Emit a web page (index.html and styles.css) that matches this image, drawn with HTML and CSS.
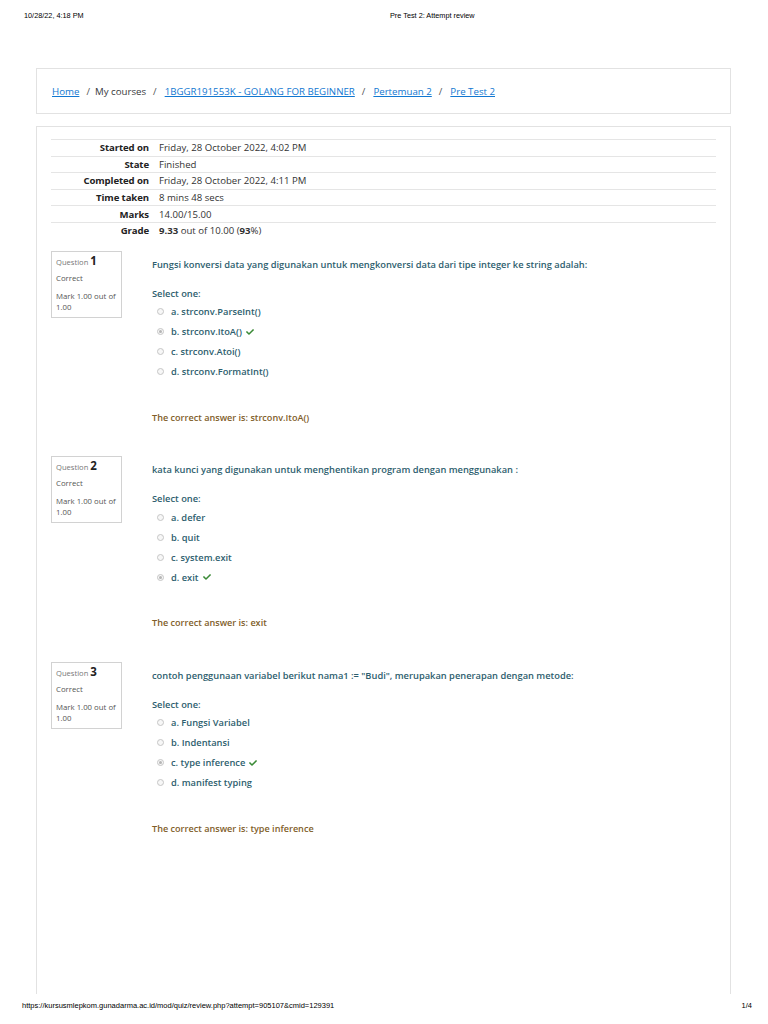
FILE: index.html
```html
<!DOCTYPE html>
<html lang="id">
<head>
<meta charset="utf-8">
<title>Pre Test 2: Attempt review</title>
<link rel="stylesheet" href="styles.css">
</head>
<body>
<div class="page">
  <header class="print-head">
    <span class="ph-date">10/28/22, 4:18 PM</span>
    <span class="ph-title">Pre Test 2: Attempt review</span>
  </header>

  <div class="sheet">
    <nav class="crumbs">
      <a href="#" class="crumb">Home</a><span class="sep">/</span>
      <span class="crumb plain">My courses</span><span class="sep">/</span>
      <a href="#" class="crumb pad">1BGGR191553K - GOLANG FOR BEGINNER</a><span class="sep">/</span>
      <a href="#" class="crumb pad">Pertemuan 2</a><span class="sep">/</span>
      <a href="#" class="crumb pad">Pre Test 2</a>
    </nav>

    <div class="main">
      <div class="summary">
        <div class="srow"><div class="sk">Started on</div><div class="sv">Friday, 28 October 2022, 4:02 PM</div></div>
        <div class="srow"><div class="sk">State</div><div class="sv">Finished</div></div>
        <div class="srow"><div class="sk">Completed on</div><div class="sv">Friday, 28 October 2022, 4:11 PM</div></div>
        <div class="srow"><div class="sk">Time taken</div><div class="sv">8 mins 48 secs</div></div>
        <div class="srow"><div class="sk">Marks</div><div class="sv">14.00/15.00</div></div>
        <div class="srow"><div class="sk">Grade</div><div class="sv"><b>9.33</b> out of 10.00 (<b>93</b>%)</div></div>
      </div>

      <div class="que">
        <div class="info">
          <div class="qno"><span class="qlabel">Question</span> <span class="qnum">1</span></div>
          <div class="qstate">Correct</div>
          <div class="qgrade">Mark 1.00 out of 1.00</div>
        </div>
        <div class="content">
          <div class="qtext">Fungsi konversi data yang digunakan untuk mengkonversi data dari tipe integer ke string adalah:</div>
          <div class="prompt">Select one:</div>
          <div class="answers">
            <div class="opt"><span class="radio"></span><span>a. strconv.ParseInt()</span></div>
            <div class="opt"><span class="radio on"></span><span>b. strconv.ItoA()</span><svg class="tick" viewBox="0 0 512 512"><path d="M173.9 439.4l-166.4-166.4c-10-10-10-26.2 0-36.2l36.2-36.2c10-10 26.2-10 36.2 0L192 312.7 432.1 72.6c10-10 26.2-10 36.2 0l36.2 36.2c10 10 10 26.2 0 36.2l-294.4 294.4c-10 10-26.2 10-36.2 0z"/></svg></div>
            <div class="opt"><span class="radio"></span><span>c. strconv.Atoi()</span></div>
            <div class="opt"><span class="radio"></span><span>d. strconv.FormatInt()</span></div>
          </div>
          <div class="outcome">The correct answer is: strconv.ItoA()</div>
        </div>
      </div>

      <div class="que">
        <div class="info">
          <div class="qno"><span class="qlabel">Question</span> <span class="qnum">2</span></div>
          <div class="qstate">Correct</div>
          <div class="qgrade">Mark 1.00 out of 1.00</div>
        </div>
        <div class="content">
          <div class="qtext">kata kunci yang digunakan untuk menghentikan program dengan menggunakan :</div>
          <div class="prompt">Select one:</div>
          <div class="answers">
            <div class="opt"><span class="radio"></span><span>a. defer</span></div>
            <div class="opt"><span class="radio"></span><span>b. quit</span></div>
            <div class="opt"><span class="radio"></span><span>c. system.exit</span></div>
            <div class="opt"><span class="radio on"></span><span>d. exit</span><svg class="tick" viewBox="0 0 512 512"><path d="M173.9 439.4l-166.4-166.4c-10-10-10-26.2 0-36.2l36.2-36.2c10-10 26.2-10 36.2 0L192 312.7 432.1 72.6c10-10 26.2-10 36.2 0l36.2 36.2c10 10 10 26.2 0 36.2l-294.4 294.4c-10 10-26.2 10-36.2 0z"/></svg></div>
          </div>
          <div class="outcome">The correct answer is: exit</div>
        </div>
      </div>

      <div class="que">
        <div class="info">
          <div class="qno"><span class="qlabel">Question</span> <span class="qnum">3</span></div>
          <div class="qstate">Correct</div>
          <div class="qgrade">Mark 1.00 out of 1.00</div>
        </div>
        <div class="content">
          <div class="qtext">contoh penggunaan variabel berikut nama1 := "Budi", merupakan penerapan dengan metode:</div>
          <div class="prompt">Select one:</div>
          <div class="answers">
            <div class="opt"><span class="radio"></span><span>a. Fungsi Variabel</span></div>
            <div class="opt"><span class="radio"></span><span>b. Indentansi</span></div>
            <div class="opt"><span class="radio on"></span><span>c. type inference</span><svg class="tick" viewBox="0 0 512 512"><path d="M173.9 439.4l-166.4-166.4c-10-10-10-26.2 0-36.2l36.2-36.2c10-10 26.2-10 36.2 0L192 312.7 432.1 72.6c10-10 26.2-10 36.2 0l36.2 36.2c10 10 10 26.2 0 36.2l-294.4 294.4c-10 10-26.2 10-36.2 0z"/></svg></div>
            <div class="opt"><span class="radio"></span><span>d. manifest typing</span></div>
          </div>
          <div class="outcome">The correct answer is: type inference</div>
        </div>
      </div>
    </div>
  </div>

  <footer class="print-foot">
    <span class="pf-url">https://kursusmlepkom.gunadarma.ac.id/mod/quiz/review.php?attempt=905107&amp;cmid=129391</span>
    <span class="pf-page">1/4</span>
  </footer>
</div>
</body>
</html>
```

FILE: styles.css
```css
* { box-sizing: border-box; }
html, body { margin: 0; padding: 0; background: #fff; }
body { font-family: "Open Sans", "Noto Sans", sans-serif; color: #333; }

.page { width: 768px; height: 1024px; overflow: hidden; }

.print-head {
  height: 30px;
  display: flex;
  align-items: center;
  padding-left: 24px;
  font-family: "Liberation Sans", Arial, sans-serif;
  font-size: 7.3px;
  color: #000;
}
.ph-date { width: 366px; }

.sheet {
  height: 964px;
  overflow: hidden;
  padding: 38px 0 0 36px;
}

.crumbs {
  width: 695px;
  height: 46px;
  border: 1px solid #e2e2e2;
  display: flex;
  align-items: center;
  padding: 0 15px;
  font-size: 9.7px;
  white-space: nowrap;
}
.crumb { color: #1177d1; text-decoration: underline; }
.crumb.plain { color: #373a3c; text-decoration: none; }
.crumb.pad { margin-left: 3px; }
.sep { color: #555; margin: 0 5px 0 7px; }

.main {
  width: 695px;
  height: 900px;
  margin-top: 12px;
  border: 1px solid #e2e2e2;
  border-bottom: none;
  padding: 12px 14px 0 14px;
}

.summary { font-size: 9.6px; color: #333; }
.srow {
  display: grid;
  grid-template-columns: 108px 1fr;
  height: 16.6px;
  border-top: 1px solid #e5e5e5;
  align-items: center;
}
.sk { font-weight: 700; text-align: right; padding-right: 10px; color: #222; letter-spacing: -0.1px; }
.sv b { font-weight: 700; }

.que {
  display: flex;
  align-items: flex-start;
  margin-top: 12px;
  margin-bottom: 31.5px;
}
.summary + .que { margin-top: 12.4px; }
.que + .que { margin-top: 0; }

.info {
  width: 71px;
  border: 1px solid #d2d2d2;
  padding: 2px 3px 4px 4px;
  font-size: 7.8px;
  color: #555;
}
.qno { line-height: 14px; }
.qlabel { color: #777; font-size: 7.6px; }
.qnum { font-size: 11.5px; font-weight: 700; color: #222; }
.qstate { line-height: 14px; margin-top: 2px; }
.qgrade { line-height: 11px; margin-top: 6px; }

.content {
  margin-left: 30px;
  font-size: 9.3px;
  font-weight: 600;
  color: #2d5e6e;
}
.qtext { line-height: 14px; margin-top: 7px; }
.prompt { line-height: 14px; margin-top: 15px; }
.answers { margin-top: 1px; }
.opt {
  height: 20px;
  display: flex;
  align-items: center;
  padding-left: 5px;
}
.radio {
  width: 7px;
  height: 7px;
  border-radius: 50%;
  border: 1px solid #c6c6c6;
  background: #f7f7f7;
  margin-right: 7px;
  display: flex;
  align-items: center;
  justify-content: center;
}
.radio.on::after {
  content: "";
  width: 3px;
  height: 3px;
  border-radius: 50%;
  background: #b5b5b5;
}
.tick { width: 8px; height: 8px; fill: #3a8a36; margin-left: 4px; }

.outcome {
  line-height: 14px;
  margin-top: 29px;
  color: #7f5e2a;
  font-size: 9.1px;
}

.print-foot {
  height: 30px;
  display: flex;
  justify-content: space-between;
  align-items: flex-start;
  padding: 7px 16px 0 22px;
  line-height: 10px;
  font-family: "Liberation Sans", Arial, sans-serif;
  font-size: 7.5px;
  color: #000;
}
```
